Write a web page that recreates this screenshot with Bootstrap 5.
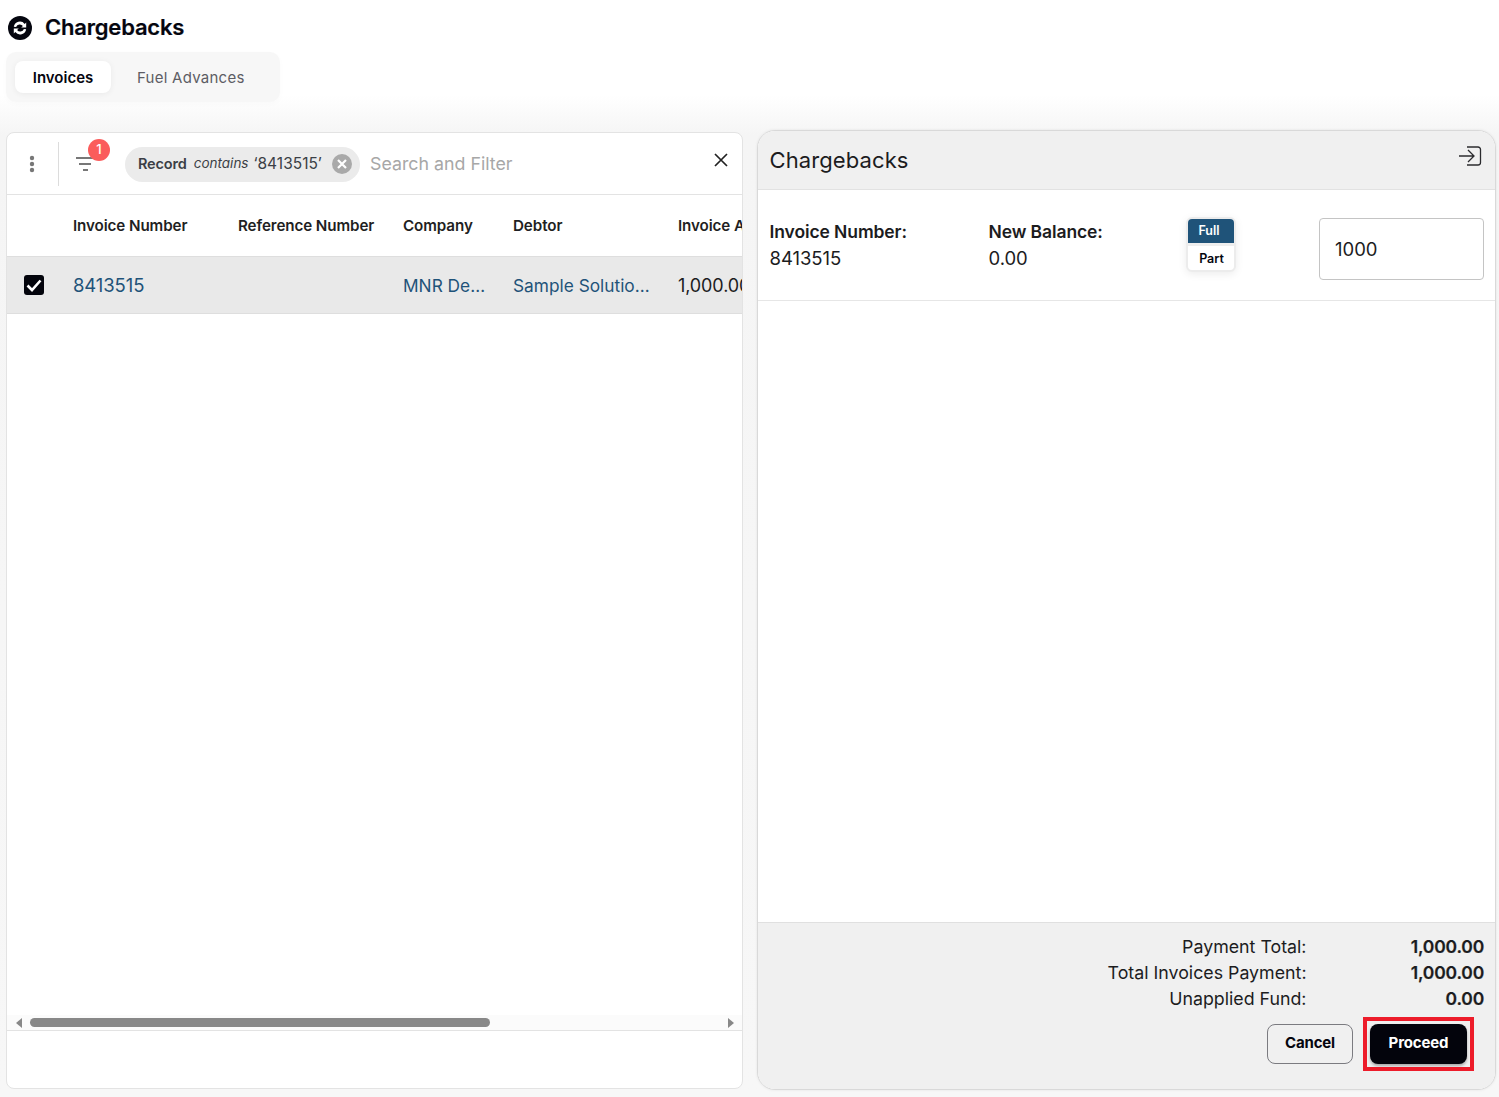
<!DOCTYPE html>
<html lang="en"><head><meta charset="utf-8"><title>Chargebacks</title>
<link href="https://cdn.jsdelivr.net/npm/bootstrap@5.3.0/dist/css/bootstrap.min.css" rel="stylesheet">
<style>
html,body{height:100%}
body{font-family:Inter,"Liberation Sans",sans-serif;background:#fff;color:#1c1c1e;overflow:hidden}
.shell{height:1097px;display:flex;flex-direction:column;background:linear-gradient(#fff 0,#fff 95px,#f5f5f5 135px,#f7f7f7 100%);padding:0 3px 7px 6px}
.page-head{height:52px;padding:3px 2px 0;gap:13px}
.page-title{font-size:22px;font-weight:600;color:#05060f;margin:0;letter-spacing:-.2px;-webkit-text-stroke:.2px #05060f}
.tabs-wrap{width:274px;height:50px;background:#f7f7f7;border-radius:10px;padding:9px;gap:9px;box-shadow:0 2px 6px rgba(0,0,0,.02)}
.tab-on{width:96px;height:32px;padding-top:2px;background:#fff;border-radius:8px;font-size:15px;font-weight:600;color:#05060f;box-shadow:0 1px 6px rgba(0,0,0,.06)}
.tab-off{padding:2px 17px 0;height:32px;font-size:15px;color:#5d5d64;letter-spacing:.25px}
.panels{flex:1;min-height:0;margin-top:28px;gap:14px}
.list-panel{width:737px;margin-top:2px;margin-bottom:1px;background:#fff;border:1px solid #e3e3e3;border-radius:8px;overflow:hidden}
.filter-bar{height:61px;padding:0 14px 0 0}
.kebab{width:52px;height:44px;border-right:1px solid #dcdcdc;flex:none;padding-right:2px}
.filter-ico{width:66px;height:44px;flex:none}
.count-dot{position:absolute;left:29px;top:-3px;width:22px;height:22px;border-radius:50%;background:#fb5c5c;color:#fff;font-size:13px;font-weight:500}
.chip{height:35px;width:235px;flex:none;background:#ebebeb;border-radius:18px;padding:0 8px 0 13px;font-size:15.5px;color:#3b3f46;margin-top:1px}
.chip b{font-weight:600;font-size:14.5px;letter-spacing:-.15px}
.chip i{font-size:13.5px;margin:0 5px 0 7px;position:relative;top:-1px}
.chip-x{width:20px;height:20px;margin-left:auto;flex:none}
.search-hint{font-size:17.8px;color:#a7a7a7;margin:2px 0 0 10px}
.close-x{margin-left:auto;margin-top:-7px}
.grid-frame{flex:1;min-height:0;border-top:1px solid #e3e3e3}
.grid-hd,.grid-rw{display:grid;grid-template-columns:66px 165px 165px 110px 165px 65px;white-space:nowrap;overflow:hidden}
.grid-hd{height:61px;padding-top:2px;font-size:15.2px;font-weight:600;color:#1f1f23;letter-spacing:-.1px;align-items:center}
.grid-rw{height:58px;background:#e9e9e9;border-top:1px solid #dedede;border-bottom:1px solid #dedede;font-size:18.5px;align-items:center;letter-spacing:-.1px}
.grid-rw>*{padding-top:1px}
.grid-rw a{color:#1f5379;text-decoration:none}
.grid-rw a.word-link{font-size:17.3px;letter-spacing:0}
.clip-cell{overflow:hidden;min-width:0}
.amt-cell{font-size:18px}
.chk{width:20px;height:20px;margin-left:17px;background:#03040c;border-radius:3px;display:flex;align-items:center;justify-content:center;padding:0}
.scroll-track{height:15px;background:#fbfbfb;padding:0 7px 0 8px;gap:7px}
.thumb{width:460px;height:9px;border-radius:5px;background:#888}
.tri-r{margin-left:auto}
.grid-foot{height:58px;border-top:1px solid #e3e3e3}
.detail-panel{width:740px;background:#fff;border:1px solid #d9d9d9;border-radius:18px;overflow:hidden;box-shadow:0 0 3px rgba(0,0,0,.08)}
.detail-head{height:59px;background:#f0f0f0;border-bottom:1px solid #e2e2e2;padding:0 13px 0 12px}
.detail-title{font-size:22px;font-weight:400;margin:0;color:#1c1c1e;letter-spacing:.1px}
.detail-row{height:111px;border-bottom:1px solid #e6e6e6;padding:0 11px;font-size:18.5px}
.field-a{width:220px;padding-left:1px}.field-b{width:197px}
.field-lbl{font-weight:600;font-size:17.5px;letter-spacing:-.1px}
.field-a,.field-b{line-height:27px;letter-spacing:-.05px;margin-top:-1px}
.toggle-pair{width:50px;height:55px;border:2px solid #ececec;border-radius:6px;background:#fff;box-shadow:0 2px 8px rgba(0,0,0,.08);font-size:12.5px;font-weight:600;flex:none;overflow:hidden;margin-top:-1px}
.toggle-on{height:24px;background:#1f5379;color:#fff;padding-right:3px}
.toggle-off{flex:1;border-top:3px solid #eee;color:#05060f;padding:3px 0 0 2px}
.amount{width:165px;height:62px;margin-left:auto;margin-top:8px;border:1px solid #c4c4c4;border-radius:4px;font-size:18.5px;padding:0 15px;color:#1c1c1e;box-shadow:none}
.detail-body{flex:1;min-height:0}
.detail-foot{height:167px;background:#f0f0f0;border-top:1px solid #e0e0e0;padding:11px 11px 0;font-size:17.8px}
.sum-line{height:26px;line-height:26px}
.sum-lbl{width:538px;text-align:right}
.sum-val{width:167px;margin-left:auto;text-align:right;font-weight:600;font-size:17.5px;letter-spacing:-.2px;-webkit-text-stroke:.2px #1c1c1e}
.act-row{margin-top:12px;gap:17px;padding-right:17px}
.btn-cancel{width:86px;height:40px;border:1px solid #7b7b80;border-radius:8px;background:transparent;font-size:15px;font-weight:700;letter-spacing:-.15px;color:#05060f;padding:0 0 2px}
.proceed-mark{outline:4px solid #ed1c2a;outline-offset:3px;width:97px;height:40px;position:relative}
.btn-proceed{width:97px;height:40px;border:0;border-radius:8px;background:#03040c;color:#fff;font-size:15px;font-weight:700;letter-spacing:-.15px;padding:0 0 2px;box-shadow:0 2px 3px rgba(0,0,0,.3)}
</style></head>
<body>
<div class="shell">
  <div class="page-head d-flex align-items-center">
    <svg width="24" height="24" viewBox="0 0 24 24" aria-hidden="true"><circle cx="12" cy="12" r="12" fill="#05060f"/><path d="M5.8 10.8a6.2 6.2 0 0 1 10.9-2.9l1.5-1.3v5H13.2l1.7-1.5A3.9 3.9 0 0 0 8.1 11zM18.2 13.2a6.2 6.2 0 0 1-10.9 2.9l-1.5 1.3v-5h5l-1.7 1.5a3.9 3.9 0 0 0 6.8-.9z" fill="#fff"/></svg>
    <h1 class="page-title">Chargebacks</h1>
  </div>
  <div class="tabs-wrap d-flex align-items-center">
    <div class="tab-on d-flex align-items-center justify-content-center">Invoices</div>
    <div class="tab-off d-flex align-items-center">Fuel Advances</div>
  </div>
  <div class="panels d-flex">
    <section class="list-panel d-flex flex-column">
      <div class="filter-bar d-flex align-items-center">
        <div class="kebab d-flex align-items-center justify-content-center">
          <svg width="6" height="18" viewBox="0 0 6 18"><g fill="#777"><circle cx="3" cy="3" r="2.2"/><circle cx="3" cy="9" r="2.2"/><circle cx="3" cy="15" r="2.2"/></g></svg>
        </div>
        <div class="filter-ico position-relative d-flex align-items-center">
          <svg class="ms-3" width="20" height="16" viewBox="0 0 20 16"><g stroke="#777" stroke-width="2"><path d="M1 2h18M4 8h12M8 14h5"/></g></svg>
          <span class="count-dot d-flex align-items-center justify-content-center">1</span>
        </div>
        <div class="chip d-flex align-items-center">
          <b>Record</b><i>contains</i><span>‘8413515’</span>
          <svg class="chip-x" viewBox="0 0 20 20"><circle cx="10" cy="10" r="10" fill="#a9a9a9"/><path d="M6 6l8 8M14 6l-8 8" stroke="#fff" stroke-width="2.2"/></svg>
        </div>
        <span class="search-hint">Search and Filter</span>
        <svg class="close-x" width="14" height="14" viewBox="0 0 14 14"><path d="M1 1l12 12M13 1L1 13" stroke="#222" stroke-width="1.7"/></svg>
      </div>
      <div class="grid-frame d-flex flex-column">
        <div class="grid-hd"><span></span><span>Invoice Number</span><span>Reference Number</span><span>Company</span><span>Debtor</span><span class="clip-cell">Invoice Amount</span></div>
        <div class="grid-rw">
          <span class="chk"><svg width="16" height="13" viewBox="0 0 16 13"><path d="M1.5 6.5l4.5 4.5 8.5-9.5" fill="none" stroke="#fff" stroke-width="2.6"/></svg></span>
          <a href="#">8413515</a><span></span><a class="word-link" href="#">MNR De…</a><a class="word-link" href="#">Sample Solutio…</a><span class="clip-cell amt-cell">1,000.00</span>
        </div>
        <div class="flex-grow-1"></div>
        <div class="scroll-track d-flex align-items-center">
          <svg width="8" height="10" viewBox="0 0 8 10"><path d="M7 0v10L1 5z" fill="#888"/></svg>
          <div class="thumb"></div>
          <svg class="tri-r" width="8" height="10" viewBox="0 0 8 10"><path d="M1 0v10l6-5z" fill="#888"/></svg>
        </div>
        <div class="grid-foot"></div>
      </div>
    </section>
    <section class="detail-panel d-flex flex-column">
      <div class="detail-head d-flex align-items-center justify-content-between">
        <h2 class="detail-title">Chargebacks</h2>
        <svg class="mb-2" width="24" height="20" viewBox="0 0 24 20"><g fill="none" stroke="#2b2b2e" stroke-width="1.3"><path d="M1 10h15M10 4l6 6-6 6"/><path d="M9 1h11a2.5 2.5 0 0 1 2.5 2.5v13A2.5 2.5 0 0 1 20 19H9"/></g></svg>
      </div>
      <div class="detail-row d-flex align-items-center">
        <div class="field-a"><div class="field-lbl">Invoice Number:</div><div>8413515</div></div>
        <div class="field-b"><div class="field-lbl">New Balance:</div><div>0.00</div></div>
        <div class="toggle-pair d-flex flex-column">
          <div class="toggle-on d-flex align-items-center justify-content-center">Full</div>
          <div class="toggle-off d-flex align-items-center justify-content-center">Part</div>
        </div>
        <input class="form-control amount" type="text" value="1000" aria-label="Amount">
      </div>
      <div class="detail-body"></div>
      <div class="detail-foot">
        <div class="sum-line d-flex"><span class="sum-lbl">Payment Total:</span><span class="sum-val">1,000.00</span></div>
        <div class="sum-line d-flex"><span class="sum-lbl">Total Invoices Payment:</span><span class="sum-val">1,000.00</span></div>
        <div class="sum-line d-flex"><span class="sum-lbl">Unapplied Fund:</span><span class="sum-val">0.00</span></div>
        <div class="act-row d-flex justify-content-end">
          <button class="btn btn-cancel" type="button">Cancel</button>
          <div class="proceed-mark"><button class="btn btn-proceed" type="button">Proceed</button></div>
        </div>
      </div>
    </section>
  </div>
</div>
<script src="https://cdn.jsdelivr.net/npm/bootstrap@5.3.0/dist/js/bootstrap.bundle.min.js"></script>
</body></html>
